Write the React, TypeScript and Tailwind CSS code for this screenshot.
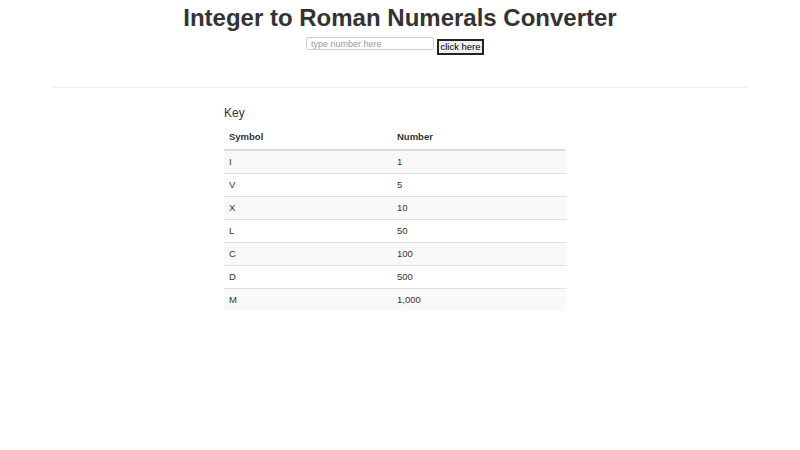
const rows = [
  { symbol: 'I', number: '1' },
  { symbol: 'V', number: '5' },
  { symbol: 'X', number: '10' },
  { symbol: 'L', number: '50' },
  { symbol: 'C', number: '100' },
  { symbol: 'D', number: '500' },
  { symbol: 'M', number: '1,000' },
];

export default function App() {
  return (
    <div className="min-h-[450px] bg-white font-['Liberation_Sans',Arial,sans-serif] text-[#333]">
      <div className="flex flex-col items-center pt-[3px]">
        <h1 className="text-[24px] leading-[30px] font-bold">Integer to Roman Numerals Converter</h1>
        <div className="mt-[4px] flex items-start gap-[3px] pr-[10px]">
          <input
            type="text"
            placeholder="type number here"
            className="h-[13px] w-[128px] rounded-[2px] border border-[#ccc] px-[4px] text-[9px] leading-[10px] placeholder:text-[#999] outline-none"
          />
          <button className="mt-[2px] h-[16px] w-[47px] border-2 border-[#222] bg-[#efefef] text-[9.5px] leading-[10px] text-black">
            click here
          </button>
        </div>
      </div>

      <hr className="mx-[52px] mt-[32px] border-t border-[#eee]" />

      <div className="mt-[17px] flex justify-center pr-[10px]">
        <div className="w-[342px]">
          <h3 className="text-[12px] leading-[16px] font-medium">Key</h3>
          <table className="mt-[4px] w-full border-collapse text-[9.5px]">
            <thead>
              <tr className="border-b-2 border-[#ddd]">
                <th className="w-[168px] px-[5px] py-[5px] text-left font-bold">Symbol</th>
                <th className="px-[5px] py-[5px] text-left font-bold">Number</th>
              </tr>
            </thead>
            <tbody>
              {rows.map((r, i) => (
                <tr key={r.symbol} className={i % 2 === 0 ? 'bg-[#f9f9f9]' : 'bg-white'}>
                  <td className={'h-[23px] px-[5px] ' + (i > 0 ? 'border-t border-[#ddd]' : '')}>{r.symbol}</td>
                  <td className={'h-[23px] px-[5px] ' + (i > 0 ? 'border-t border-[#ddd]' : '')}>{r.number}</td>
                </tr>
              ))}
            </tbody>
          </table>
        </div>
      </div>
    </div>
  );
}
